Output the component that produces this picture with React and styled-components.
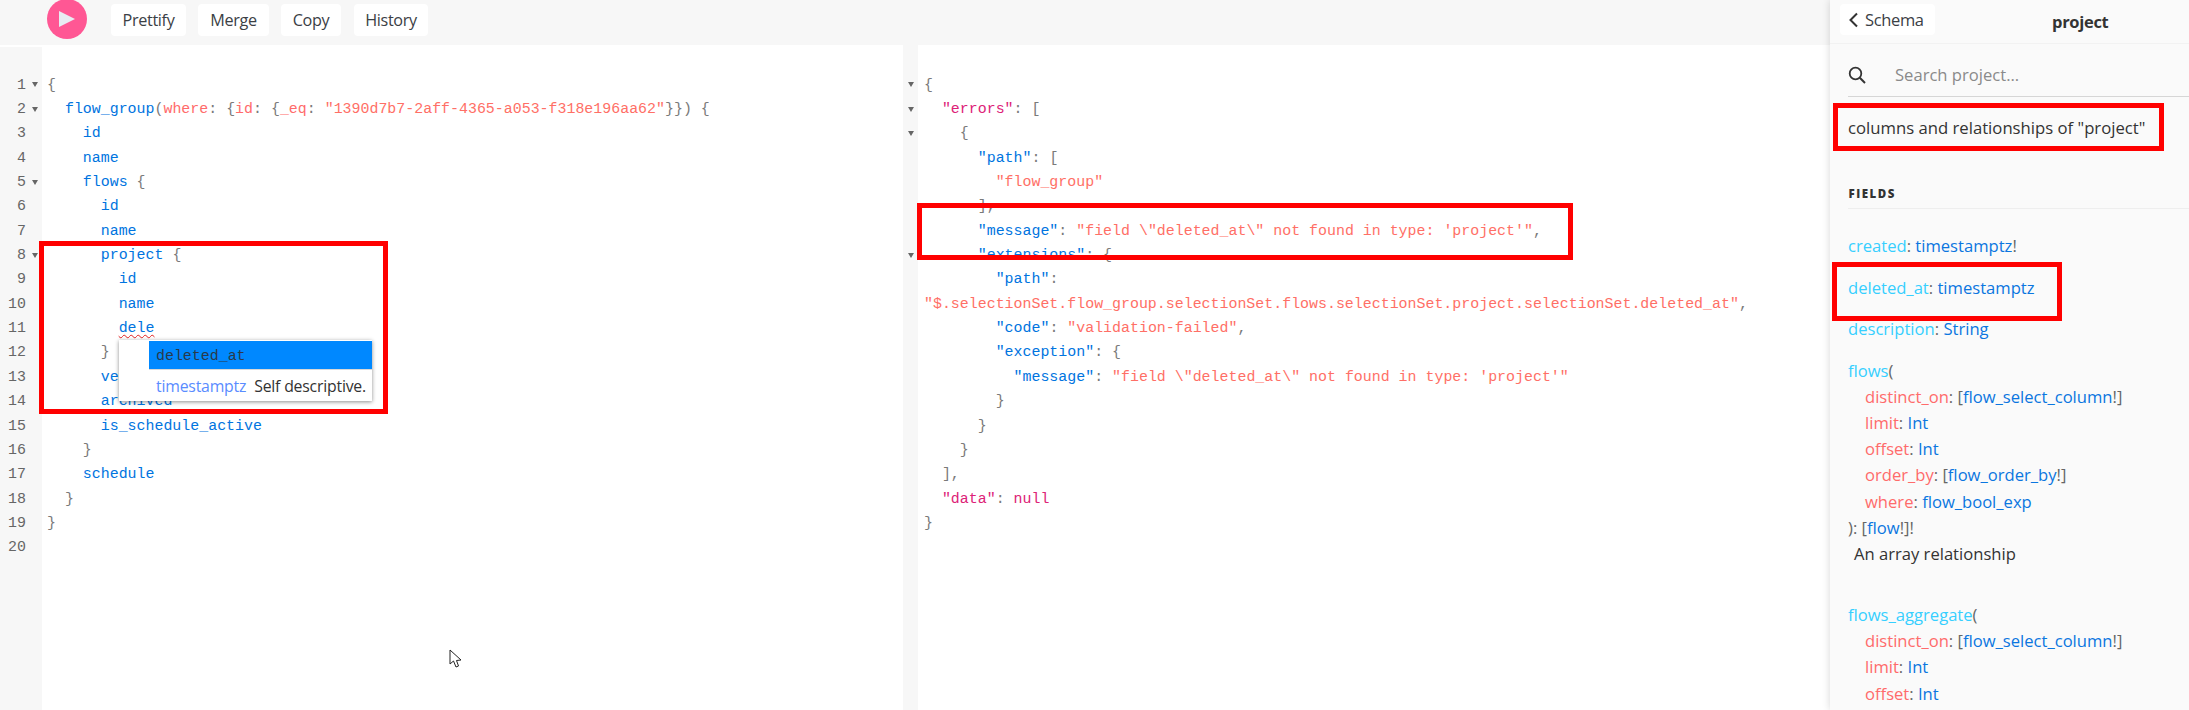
import React from "react";
import styled, { createGlobalStyle } from "styled-components";

const Global = createGlobalStyle`
  html, body { margin: 0; padding: 0; background: #fff; height: 710px; overflow: hidden; }
  * { box-sizing: border-box; }
`;

const UI = `"Open Sans", "Noto Sans", "Liberation Sans", sans-serif`;
const MONO = `"Liberation Mono", "DejaVu Sans Mono", monospace`;
const LINE = 24.37;
const MONO_SIZE = 14.93;

const colors = {
  p: "#0074e0",
  k: "#ff6b6b",
  u: "#7a7a7a",
  s: "#ff6f66",
  e: "#dd2277",
};

const Page = styled.div`
  position: relative;
  display: flex;
  width: 2189px;
  height: 710px;
  overflow: hidden;
`;
const Main = styled.div`
  width: 1830px;
  display: flex;
  flex-direction: column;
`;
const Toolbar = styled.div`
  height: 45px;
  background: #f7f7f7;
  display: flex;
  align-items: flex-start;
  padding: 4px 0 0 47px;
`;
const PlayButton = styled.button`
  width: 40px;
  height: 40px;
  margin: -5px 24px 0 0;
  padding: 0;
  border: 0;
  border-radius: 50%;
  background: #ff5794;
  display: flex;
  align-items: center;
  justify-content: center;
`;
const ToolButton = styled.button`
  height: 32px;
  width: ${(p) => p.$w}px;
  margin-right: ${(p) => p.$gap}px;
  padding: 0;
  border: 0;
  border-radius: 4px;
  background: #fff;
  color: #3b4045;
  font: 16.2px ${UI};
  letter-spacing: -0.35px;
`;
const Panes = styled.div`
  flex: 1;
  display: flex;
  min-height: 0;
`;
const Pane = styled.div`
  width: ${(p) => p.$w}px;
  display: flex;
  background: #fff;
`;
const Gutter = styled.div`
  width: ${(p) => p.$w}px;
  flex: none;
  background: #f7f7f7;
  padding-top: ${(p) => 27.5 - p.$top}px;
  margin-top: ${(p) => p.$top}px;
`;
const GutterRow = styled.div`
  height: ${LINE}px;
  display: flex;
  align-items: center;
  justify-content: flex-end;
  font: ${MONO_SIZE}px/${LINE}px ${MONO};
  color: #666;
`;
const LineNo = styled.span`
  margin-right: 6px;
`;
const Fold = styled.span`
  width: 0;
  height: 0;
  margin-right: ${(p) => p.$right}px;
  border-left: 3px solid transparent;
  border-right: 3px solid transparent;
  border-top: 5px solid ${(p) => (p.$on ? "#666" : "transparent")};
`;
const Code = styled.div`
  flex: 1;
  padding: 27.5px 0 0 ${(p) => p.$left}px;
  font: ${MONO_SIZE}px/${LINE}px ${MONO};
  white-space: pre;
`;
const CodeLine = styled.div`
  height: ${LINE}px;
`;
const Token = styled.span`
  color: ${(p) => colors[p.$k]};
`;
const Squiggle = styled.span`
  color: ${colors.p};
  text-decoration: underline wavy #e02020 1px;
  text-underline-offset: 2px;
`;

const Explorer = styled.aside`
  width: 359px;
  flex: none;
  background: #fafafa;
  box-shadow: 0 0 8px rgba(0, 0, 0, 0.16);
  font: 16.6px/26.2px ${UI};
  color: #333;
  z-index: 1;
`;
const ExplorerHead = styled.div`
  height: 44px;
  position: relative;
  padding: 4px 0 0 10px;
  border-bottom: 1px solid #f2f2f2;
`;
const BackButton = styled.button`
  width: 95px;
  height: 31px;
  padding: 0 0 0 8px;
  border: 0;
  border-radius: 4px;
  background: #fff;
  color: #3b4045;
  display: flex;
  align-items: center;
  gap: 6px;
  font: 16.5px ${UI};
  letter-spacing: -0.35px;
`;
const Title = styled.div`
  position: absolute;
  left: 222px;
  top: 9px;
  font: 700 16.5px/26px ${UI};
  letter-spacing: -0.3px;
  color: #333;
`;
const SearchBox = styled.div`
  margin: 0 0 0 18px;
  height: 53px;
  display: flex;
  align-items: center;
  padding: 10px 0 0 0;
  border-bottom: 1px solid #d6d6d6;
`;
const SearchText = styled.span`
  margin-left: 29px;
  color: #8a8a8a;
`;
const Description = styled.div`
  margin: 18px 0 0 18px;
  height: 26px;
  font-size: 16.7px;
  color: #333;
`;
const SectionTitle = styled.div`
  margin: 44px 0 0 18.5px;
  height: 23px;
  font: 800 11.5px/18px ${UI};
  letter-spacing: 1.5px;
  color: #333;
`;
const SectionRule = styled.div`
  margin-left: 18px;
  border-top: 1px solid #eeeeee;
`;
const FieldList = styled.div`
  margin: 24px 0 0 18px;
`;
const Field = styled.div`
  height: 26.2px;
  margin-top: ${(p) => p.$top || 0}px;
  padding-left: ${(p) => p.$indent || 0}px;
  white-space: pre;
`;
const Name = styled.span`
  color: #36cfff;
`;
const Arg = styled.span`
  color: #ff6b6b;
`;
const Type = styled.span`
  color: #0b76e0;
`;
const Punct = styled.span`
  color: #666;
`;

const RedBox = styled.div`
  position: absolute;
  left: ${(p) => p.$x}px;
  top: ${(p) => p.$y}px;
  width: ${(p) => p.$w}px;
  height: ${(p) => p.$h}px;
  border: 5px solid #ff0000;
  z-index: 3;
`;
const Hint = styled.div`
  position: absolute;
  left: 119px;
  top: 340px;
  width: 253px;
  height: 61px;
  background: #fff;
  padding: 1px 0 0 30px;
  box-shadow: 0 1px 4px rgba(0, 0, 0, 0.45);
  z-index: 2;
`;
const HintRow = styled.div`
  height: 29px;
  padding-left: 7px;
  background: #0088ff;
  border-bottom: 1px solid #d8d8d8;
  color: #2a3a4a;
  font: ${MONO_SIZE}px/30px ${MONO};
`;
const HintInfo = styled.div`
  padding-top: 1px;
  display: flex;
  gap: 8px;
  margin-left: 7px;
  font: 15.8px/30px ${UI};
  letter-spacing: -0.2px;
  white-space: pre;
  color: #333;
`;
const HintType = styled.span`
  color: #5a8cff;
`;
const Cursor = styled.svg`
  position: absolute;
  left: 449px;
  top: 649px;
  z-index: 3;
`;

const t = (k, s) => [k, s];
const editor = [
  [t("u", "{")],
  [t("", "  "), t("p", "flow_group"), t("u", "("), t("k", "where"), t("u", ": {"), t("k", "id"), t("u", ": {"), t("k", "_eq"), t("u", ": "), t("s", '"1390d7b7-2aff-4365-a053-f318e196aa62"'), t("u", "}}) {")],
  [t("p", "    id")],
  [t("p", "    name")],
  [t("p", "    flows"), t("u", " {")],
  [t("p", "      id")],
  [t("p", "      name")],
  [t("p", "      project"), t("u", " {")],
  [t("p", "        id")],
  [t("p", "        name")],
  "squiggle",
  [t("u", "      }")],
  [t("p", "      version")],
  [t("p", "      archived")],
  [t("p", "      is_schedule_active")],
  [t("u", "    }")],
  [t("p", "    schedule")],
  [t("u", "  }")],
  [t("u", "}")],
  [],
];
const editorFolds = [0, 1, 4, 7];

const msg = `"field \\"deleted_at\\" not found in type: 'project'"`;
const result = [
  [t("u", "{")],
  [t("e", '  "errors"'), t("u", ": [")],
  [t("u", "    {")],
  [t("p", '      "path"'), t("u", ": [")],
  [t("s", '        "flow_group"')],
  [t("u", "      ],")],
  [t("p", '      "message"'), t("u", ": "), t("s", msg), t("u", ",")],
  [t("p", '      "extensions"'), t("u", ": {")],
  [t("p", '        "path"'), t("u", ":")],
  [t("s", '"$.selectionSet.flow_group.selectionSet.flows.selectionSet.project.selectionSet.deleted_at"'), t("u", ",")],
  [t("p", '        "code"'), t("u", ": "), t("s", '"validation-failed"'), t("u", ",")],
  [t("p", '        "exception"'), t("u", ": {")],
  [t("p", '          "message"'), t("u", ": "), t("s", msg)],
  [t("u", "        }")],
  [t("u", "      }")],
  [t("u", "    }")],
  [t("u", "  ],")],
  [t("e", '  "data"'), t("u", ": "), t("e", "null")],
  [t("u", "}")],
];
const resultFolds = [0, 1, 2, 7];

const renderLine = (line, i) => (
  <CodeLine key={i}>
    {line === "squiggle" ? (
      <>
        {"        "}
        <Squiggle>dele</Squiggle>
      </>
    ) : (
      line.map(([k, s], j) => (k ? <Token key={j} $k={k}>{s}</Token> : <span key={j}>{s}</span>))
    )}
  </CodeLine>
);

const Args = () => (
  <>
    <Field $indent={17}><Arg>distinct_on</Arg><Punct>: [</Punct><Type>flow_select_column</Type><Punct>!]</Punct></Field>
    <Field $indent={17}><Arg>limit</Arg><Punct>: </Punct><Type>Int</Type></Field>
    <Field $indent={17}><Arg>offset</Arg><Punct>: </Punct><Type>Int</Type></Field>
  </>
);

export default function App() {
  return (
    <Page>
      <Global />
      <Main>
        <Toolbar>
          <PlayButton aria-label="Run">
            <svg width="18" height="20" viewBox="0 0 18 20">
              <path d="M1 2 L17 10 L1 18 Z" fill="#e8ebf2" />
            </svg>
          </PlayButton>
          <ToolButton $w={75} $gap={12}>Prettify</ToolButton>
          <ToolButton $w={71} $gap={12}>Merge</ToolButton>
          <ToolButton $w={60} $gap={13}>Copy</ToolButton>
          <ToolButton $w={74} $gap={0}>History</ToolButton>
        </Toolbar>
        <Panes>
          <Pane $w={903}>
            <Gutter $w={42} $top={2}>
              {editor.map((_, i) => (
                <GutterRow key={i}>
                  <LineNo>{i + 1}</LineNo>
                  <Fold $on={editorFolds.includes(i)} $right={4} />
                </GutterRow>
              ))}
            </Gutter>
            <Code $left={5}>{editor.map(renderLine)}</Code>
          </Pane>
          <Pane $w={927}>
            <Gutter $w={15} $top={0}>
              {result.map((_, i) => (
                <GutterRow key={i}>
                  <Fold $on={resultFolds.includes(i)} $right={4} />
                </GutterRow>
              ))}
            </Gutter>
            <Code $left={6}>{result.map(renderLine)}</Code>
          </Pane>
        </Panes>
      </Main>
      <Explorer>
        <ExplorerHead>
          <BackButton>
            <svg width="11" height="16" viewBox="0 0 11 16">
              <path d="M9 1.5 L2.5 8 L9 14.5" fill="none" stroke="#333" strokeWidth="2" />
            </svg>
            Schema
          </BackButton>
          <Title>project</Title>
        </ExplorerHead>
        <SearchBox>
          <svg width="18" height="18" viewBox="0 0 18 18">
            <circle cx="7.5" cy="7.5" r="5.8" fill="none" stroke="#333" strokeWidth="1.8" />
            <path d="M11.8 11.8 L17 17" stroke="#333" strokeWidth="2" />
          </svg>
          <SearchText>Search project...</SearchText>
        </SearchBox>
        <Description>columns and relationships of "project"</Description>
        <SectionTitle>FIELDS</SectionTitle>
        <SectionRule />
        <FieldList>
          <Field><Name>created</Name><Punct>: </Punct><Type>timestamptz</Type><Punct>!</Punct></Field>
          <Field $top={16}><Name>deleted_at</Name><Punct>: </Punct><Type>timestamptz</Type></Field>
          <Field $top={15}><Name>description</Name><Punct>: </Punct><Type>String</Type></Field>
          <Field $top={15}><Name>flows</Name><Punct>(</Punct></Field>
          <Args />
          <Field $indent={17}><Arg>order_by</Arg><Punct>: [</Punct><Type>flow_order_by</Type><Punct>!]</Punct></Field>
          <Field $indent={17}><Arg>where</Arg><Punct>: </Punct><Type>flow_bool_exp</Type></Field>
          <Field><Punct>): [</Punct><Type>flow</Type><Punct>!]!</Punct></Field>
          <Field $indent={6}>An array relationship</Field>
          <Field $top={35}><Name>flows_aggregate</Name><Punct>(</Punct></Field>
          <Args />
        </FieldList>
      </Explorer>

      <Hint>
        <HintRow>deleted_at</HintRow>
        <HintInfo>
          <HintType>timestamptz</HintType>
          <span>Self descriptive.</span>
        </HintInfo>
      </Hint>
      <RedBox $x={39} $y={241} $w={349} $h={173} />
      <RedBox $x={917} $y={203} $w={656} $h={57} />
      <RedBox $x={1833} $y={103} $w={331} $h={48} />
      <RedBox $x={1832} $y={262} $w={230} $h={59} />
      <Cursor width="13" height="19" viewBox="0 0 13 19">
        <path d="M1 1 L1 15 L4.5 12 L7 18 L9.5 17 L7.5 11.5 L12 11 Z" fill="#fff" stroke="#222" strokeWidth="1" />
      </Cursor>
    </Page>
  );
}
